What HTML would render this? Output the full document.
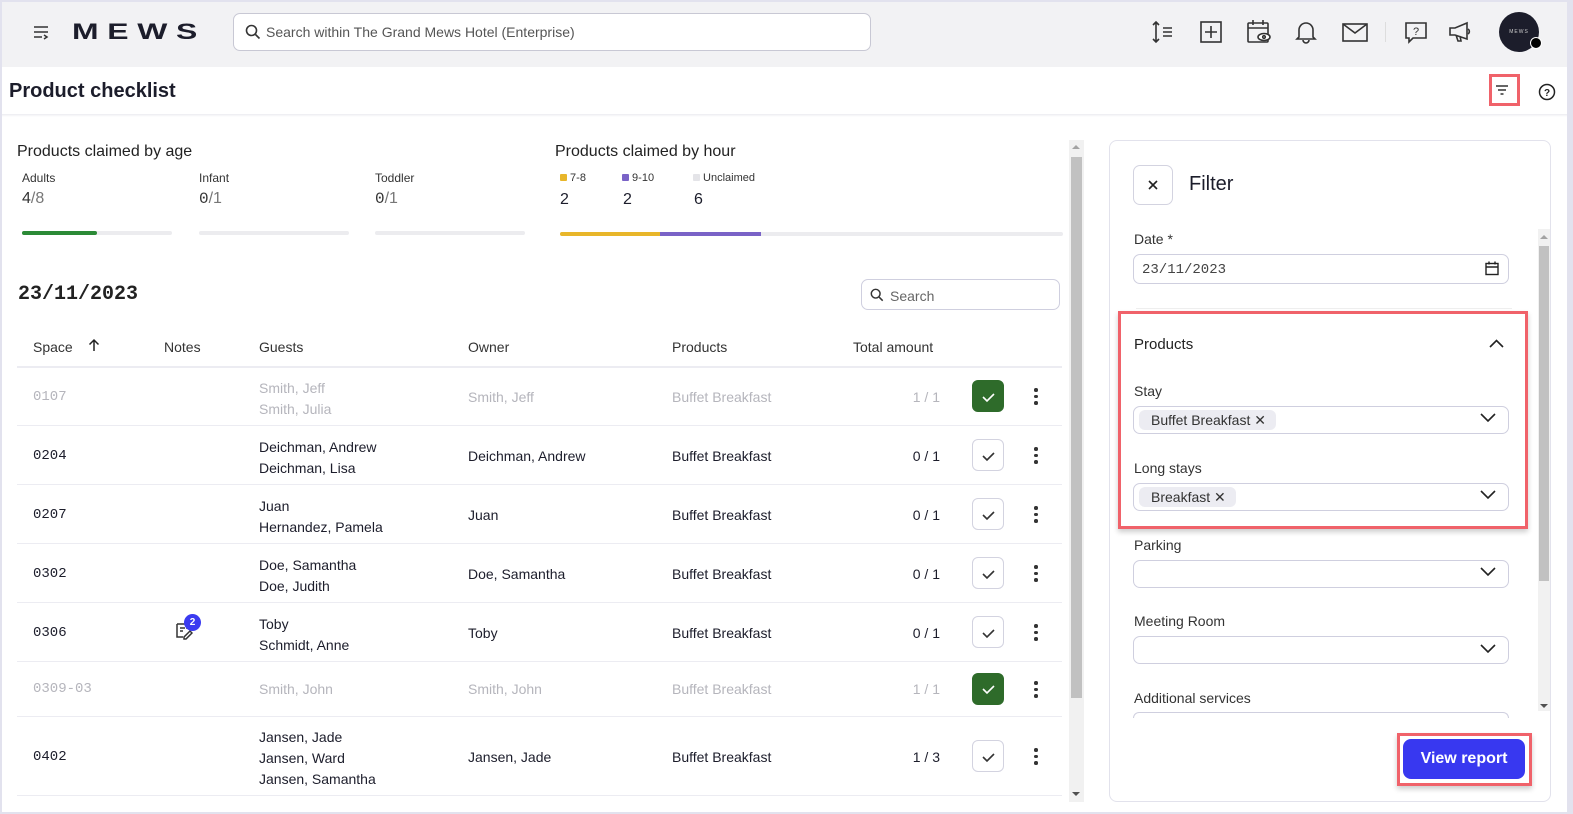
<!DOCTYPE html>
<html><head><meta charset="utf-8"><style>
*{box-sizing:border-box;margin:0;padding:0}
body{width:1573px;height:814px;overflow:hidden;background:#fff;font-family:"Liberation Sans",sans-serif;color:#1c1d2b;position:relative}
.abs{position:absolute}
.frame{position:absolute;left:0;top:0;width:1573px;height:814px;border:2px solid #e2e2ee;border-right-width:6px;pointer-events:none}
.top{left:0;top:0;width:1573px;height:67px;background:#f2f2f4}
.mono{font-family:"Liberation Mono",monospace}
.t14{font-size:14px}
.g{color:#b5b5bc}
.amt{position:absolute;left:900px;width:40px;text-align:right;font-size:14px}
.row{position:absolute;left:17px;width:1045px;border-top:1px solid #ececf2}
.cb{position:absolute;width:32px;height:32px;border:1px solid #d3d3e0;border-radius:6px;background:#fff}
.cb.on{background:#2e6b2a;border-color:#2e6b2a}
.dots{position:absolute;width:4px}
.dots i{display:block;width:3.5px;height:3.5px;border-radius:50%;background:#333;margin-bottom:3px}
.sel{position:absolute;left:1133px;width:376px;height:28px;border:1px solid #cfcfdf;border-radius:7px;background:#fff}
.lbl{position:absolute;left:1134px;font-size:14px;color:#333}
.chip{position:absolute;top:3px;left:5px;height:20px;background:#ececf2;border-radius:6px;font-size:14px;padding:2px 10px 0 12px;color:#333}
.red{position:absolute;border:3px solid #f0626a}
</style></head><body>
<div class="abs top"></div>
<svg class="abs" style="left:32px;top:24px" width="20" height="18" viewBox="0 0 20 18"><path d="M2 3h14M2 8h14M2 13h8M12 11l3 2-3 2" stroke="#333" stroke-width="1.5" fill="none"/></svg>
<div class="abs" style="left:72px;top:19px;font-size:22px;font-weight:bold;letter-spacing:6px;color:#1c1d2b;transform:scaleX(1.45);transform-origin:left">MEWS</div>
<div class="abs" style="left:233px;top:13px;width:638px;height:38px;border:1px solid #c8c8d4;border-radius:7px;background:#fff"></div>
<svg class="abs" style="left:245px;top:24px" width="16" height="16" viewBox="0 0 16 16"><circle cx="6.5" cy="6.5" r="5" stroke="#333" stroke-width="1.6" fill="none"/><path d="M10.5 10.5l4 4" stroke="#333" stroke-width="1.6"/></svg>
<div class="abs t14" style="left:266px;top:24px;color:#555">Search within The Grand Mews Hotel (Enterprise)</div>
<svg class="abs" style="left:1150px;top:19px" width="26" height="26" viewBox="0 0 26 26" fill="none" stroke="#333" stroke-width="1.6"><path d="M6 3v20M3 6l3-3 3 3M3 20l3 3 3-3M13 9h9M13 13h9M13 17h9"/></svg>
<svg class="abs" style="left:1200px;top:21px" width="22" height="22" viewBox="0 0 22 22" fill="none" stroke="#333" stroke-width="1.6"><rect x="1" y="1" width="20" height="20"/><path d="M11 5v12M5 11h12"/></svg>
<svg class="abs" style="left:1247px;top:19px" width="26" height="26" viewBox="0 0 26 26" fill="none" stroke="#333" stroke-width="1.6"><rect x="1" y="4" width="20" height="19" rx="1"/><path d="M1 9h20M6 1v5M16 1v5"/><ellipse cx="17" cy="18" rx="6" ry="3.5" fill="#fff"/><circle cx="17" cy="18" r="1.3"/></svg>
<svg class="abs" style="left:1295px;top:20px" width="22" height="24" viewBox="0 0 22 24" fill="none" stroke="#333" stroke-width="1.6"><path d="M4 17V10a7 7 0 0114 0v7l2 2H2zM8 20a3 3 0 006 0"/></svg>
<svg class="abs" style="left:1342px;top:23px" width="26" height="19" viewBox="0 0 26 19" fill="none" stroke="#333" stroke-width="1.6"><rect x="1" y="1" width="24" height="17"/><path d="M1 1l12 9 12-9"/></svg>
<div class="abs" style="left:1385px;top:22px;width:1px;height:20px;background:#ddd"></div>
<svg class="abs" style="left:1405px;top:22px" width="22" height="22" viewBox="0 0 22 22" fill="none" stroke="#333" stroke-width="1.6"><path d="M1 1h20v15H8l-4 4v-4H1z"/><text x="11" y="13" font-size="11" text-anchor="middle" fill="#333" stroke="none" font-family="Liberation Sans">?</text></svg>
<svg class="abs" style="left:1447px;top:21px" width="26" height="22" viewBox="0 0 26 22" fill="none" stroke="#333" stroke-width="1.6"><path d="M3 7h5l12-5v16L8 14H3zM9 14l2 6h3l-1-5"/><path d="M21 8a3 3 0 010 5"/></svg>
<div class="abs" style="left:1499px;top:12px;width:40px;height:40px;border-radius:50%;background:#1c1d2b;color:#ccc;font-size:5px;text-align:center;line-height:40px;letter-spacing:1px">MEWS</div>
<div class="abs" style="left:1530px;top:37px;width:12px;height:12px;border-radius:50%;background:#000;border:1px solid #fff"></div>
<div class="abs" style="left:9px;top:80px;font-size:20px;font-weight:bold;color:#1c1d2b">Product checklist</div>
<div class="abs" style="left:0;top:114px;width:1573px;height:3px;background:linear-gradient(#ececf0,#fff)"></div>
<div class="red" style="left:1489px;top:74px;width:31px;height:32px"></div>
<svg class="abs" style="left:1494px;top:84px" width="16" height="12" viewBox="0 0 16 12" stroke="#333" stroke-width="1.5"><path d="M2 2h12M4 6h8M6.5 10h3"/></svg>
<svg class="abs" style="left:1538px;top:83px" width="18" height="18" viewBox="0 0 18 18" fill="none" stroke="#222" stroke-width="1.5"><circle cx="9" cy="9" r="7.5"/><text x="9" y="13" font-size="10" text-anchor="middle" fill="#222" stroke="none" font-family="Liberation Sans" font-weight="bold">?</text></svg>
<div class="abs" style="left:17px;top:143px;font-size:16px;color:#222">Products claimed by age</div>
<div class="abs" style="left:22px;top:171px;font-size:12px;color:#333">Adults</div>
<div class="abs" style="left:199px;top:171px;font-size:12px;color:#333">Infant</div>
<div class="abs" style="left:375px;top:171px;font-size:12px;color:#333">Toddler</div>
<div class="abs" style="left:22px;top:190px;font-size:16px;color:#333">4<span style="color:#777">/8</span></div>
<div class="abs mono" style="left:199px;top:190px;font-size:16px;color:#333">0<span style="color:#777;font-family:'Liberation Sans'">/1</span></div>
<div class="abs mono" style="left:375px;top:190px;font-size:16px;color:#333">0<span style="color:#777;font-family:'Liberation Sans'">/1</span></div>
<div class="abs" style="left:22px;top:231px;width:150px;height:4px;border-radius:2px;background:#ececef"><div style="width:75px;height:4px;border-radius:2px;background:#2b8a36"></div></div>
<div class="abs" style="left:199px;top:231px;width:150px;height:4px;border-radius:2px;background:#ececef"></div>
<div class="abs" style="left:375px;top:231px;width:150px;height:4px;border-radius:2px;background:#ececef"></div>
<div class="abs" style="left:555px;top:143px;font-size:16px;color:#222">Products claimed by hour</div>
<div class="abs" style="left:560px;top:172px;font-size:11px;color:#333"><span style="display:inline-block;width:7px;height:7px;background:#e8b62a;border-radius:1px"></span> 7-8</div>
<div class="abs" style="left:622px;top:172px;font-size:11px;color:#333"><span style="display:inline-block;width:7px;height:7px;background:#7a63c7;border-radius:1px"></span> 9-10</div>
<div class="abs" style="left:693px;top:172px;font-size:11px;color:#333"><span style="display:inline-block;width:7px;height:7px;background:#e4e4e8;border-radius:1px"></span> Unclaimed</div>
<div class="abs" style="left:560px;top:191px;font-size:16px">2</div>
<div class="abs" style="left:623px;top:191px;font-size:16px">2</div>
<div class="abs" style="left:694px;top:191px;font-size:16px">6</div>
<div class="abs" style="left:560px;top:232px;width:503px;height:4px;border-radius:2px;background:#ececef;overflow:hidden"><div style="float:left;width:100px;height:4px;background:#e8b62a"></div><div style="float:left;width:101px;height:4px;background:#7a63c7"></div></div>
<div class="abs mono" style="left:18px;top:283px;font-size:20px;font-weight:bold;color:#222">23/11/2023</div>
<div class="abs" style="left:861px;top:279px;width:199px;height:31px;border:1px solid #cfcfdf;border-radius:7px"></div>
<svg class="abs" style="left:870px;top:288px" width="14" height="14" viewBox="0 0 16 16"><circle cx="6.5" cy="6.5" r="5" stroke="#333" stroke-width="1.7" fill="none"/><path d="M10.5 10.5l4 4" stroke="#333" stroke-width="1.7"/></svg>
<div class="abs t14" style="left:890px;top:288px;color:#666">Search</div>
<div class="abs t14" style="left:33px;top:339px;color:#333">Space</div>
<svg class="abs" style="left:88px;top:338px" width="12" height="14" viewBox="0 0 12 14" fill="none" stroke="#222" stroke-width="1.5"><path d="M6 13V2M1.5 6.5L6 2l4.5 4.5"/></svg>
<div class="abs t14" style="left:164px;top:339px;color:#333">Notes</div>
<div class="abs t14" style="left:259px;top:339px;color:#333">Guests</div>
<div class="abs t14" style="left:468px;top:339px;color:#333">Owner</div>
<div class="abs t14" style="left:672px;top:339px;color:#333">Products</div>
<div class="abs t14" style="left:853px;top:339px;color:#333">Total amount</div>
<div class="row" style="top:366px;border-top-width:2px"></div>
<div class="row" style="top:425px"></div><div class="row" style="top:484px"></div><div class="row" style="top:543px"></div><div class="row" style="top:602px"></div><div class="row" style="top:661px"></div><div class="row" style="top:716px"></div><div class="row" style="top:795px"></div>

<div class="abs mono t14 g" style="left:33px;top:389px">0107</div>
<div class="abs t14 g" style="left:259px;top:378px;line-height:21px">Smith, Jeff<br>Smith, Julia</div>
<div class="abs t14 g" style="left:468px;top:389px">Smith, Jeff</div>
<div class="abs t14 g" style="left:672px;top:389px">Buffet Breakfast</div>
<div class="amt g" style="top:389px">1 / 1</div>

<div class="abs mono t14" style="left:33px;top:448px">0204</div>
<div class="abs t14" style="left:259px;top:437px;line-height:21px">Deichman, Andrew<br>Deichman, Lisa</div>
<div class="abs t14" style="left:468px;top:448px">Deichman, Andrew</div>
<div class="abs t14" style="left:672px;top:448px">Buffet Breakfast</div>
<div class="amt" style="top:448px">0 / 1</div>

<div class="abs mono t14" style="left:33px;top:507px">0207</div>
<div class="abs t14" style="left:259px;top:496px;line-height:21px">Juan<br>Hernandez, Pamela</div>
<div class="abs t14" style="left:468px;top:507px">Juan</div>
<div class="abs t14" style="left:672px;top:507px">Buffet Breakfast</div>
<div class="amt" style="top:507px">0 / 1</div>

<div class="abs mono t14" style="left:33px;top:566px">0302</div>
<div class="abs t14" style="left:259px;top:555px;line-height:21px">Doe, Samantha<br>Doe, Judith</div>
<div class="abs t14" style="left:468px;top:566px">Doe, Samantha</div>
<div class="abs t14" style="left:672px;top:566px">Buffet Breakfast</div>
<div class="amt" style="top:566px">0 / 1</div>

<div class="abs mono t14" style="left:33px;top:625px">0306</div>
<svg class="abs" style="left:175px;top:622px" width="18" height="18" viewBox="0 0 18 18" fill="none" stroke="#333" stroke-width="1.5"><path d="M2 2h10v5M2 2v13h6M5 6h5M5 9h3M9 15l6-6 2 2-6 6H9z"/></svg>
<div class="abs" style="left:184px;top:614px;width:17px;height:17px;border-radius:50%;background:#3b3bf0;color:#fff;font-size:10px;font-weight:bold;text-align:center;line-height:17px">2</div>
<div class="abs t14" style="left:259px;top:614px;line-height:21px">Toby<br>Schmidt, Anne</div>
<div class="abs t14" style="left:468px;top:625px">Toby</div>
<div class="abs t14" style="left:672px;top:625px">Buffet Breakfast</div>
<div class="amt" style="top:625px">0 / 1</div>

<div class="abs mono t14 g" style="left:33px;top:681px">0309-03</div>
<div class="abs t14 g" style="left:259px;top:681px">Smith, John</div>
<div class="abs t14 g" style="left:468px;top:681px">Smith, John</div>
<div class="abs t14 g" style="left:672px;top:681px">Buffet Breakfast</div>
<div class="amt g" style="top:681px">1 / 1</div>

<div class="abs mono t14" style="left:33px;top:749px">0402</div>
<div class="abs t14" style="left:259px;top:727px;line-height:21px">Jansen, Jade<br>Jansen, Ward<br>Jansen, Samantha</div>
<div class="abs t14" style="left:468px;top:749px">Jansen, Jade</div>
<div class="abs t14" style="left:672px;top:749px">Buffet Breakfast</div>
<div class="amt" style="top:749px">1 / 3</div>

<div class="cb on" style="left:972px;top:380px"></div><div class="cb" style="left:972px;top:439px"></div><div class="cb" style="left:972px;top:498px"></div><div class="cb" style="left:972px;top:557px"></div><div class="cb" style="left:972px;top:616px"></div><div class="cb on" style="left:972px;top:673px"></div><div class="cb" style="left:972px;top:740px"></div>
<svg class="abs" style="left:972px;top:0" width="32" height="814" viewBox="0 0 32 814" fill="none" stroke-width="1.6">
<path d="M11 397l4 4 7-7" stroke="#fff"/><path d="M11 456l4 4 7-7" stroke="#333"/><path d="M11 515l4 4 7-7" stroke="#333"/><path d="M11 574l4 4 7-7" stroke="#333"/><path d="M11 633l4 4 7-7" stroke="#333"/><path d="M11 689l4 4 7-7" stroke="#fff"/><path d="M11 757l4 4 7-7" stroke="#333"/></svg>
<div class="dots" style="left:1034px;top:388px"><i></i><i></i><i></i></div>
<div class="dots" style="left:1034px;top:447px"><i></i><i></i><i></i></div>
<div class="dots" style="left:1034px;top:506px"><i></i><i></i><i></i></div>
<div class="dots" style="left:1034px;top:565px"><i></i><i></i><i></i></div>
<div class="dots" style="left:1034px;top:624px"><i></i><i></i><i></i></div>
<div class="dots" style="left:1034px;top:681px"><i></i><i></i><i></i></div>
<div class="dots" style="left:1034px;top:748px"><i></i><i></i><i></i></div>
<div class="abs" style="left:1069px;top:140px;width:15px;height:662px;background:#f1f1f1"></div>
<div class="abs" style="left:1071px;top:157px;width:11px;height:541px;background:#c1c1c1"></div>
<div class="abs" style="left:1072px;top:145px;width:0;height:0;border:4px solid transparent;border-bottom-color:#a3a3a3;border-top:0"></div>
<div class="abs" style="left:1072px;top:792px;width:0;height:0;border:4px solid transparent;border-top-color:#505050;border-bottom:0"></div>
<div class="abs" style="left:1109px;top:140px;width:442px;height:662px;border:1px solid #e2e2ec;border-radius:8px;background:#fff"></div>
<div class="abs" style="left:1133px;top:165px;width:40px;height:40px;border:1px solid #d3d3e0;border-radius:7px"></div>
<svg class="abs" style="left:1147px;top:179px" width="12" height="12" viewBox="0 0 12 12" stroke="#222" stroke-width="1.6"><path d="M2 2l8 8M10 2l-8 8"/></svg>
<div class="abs" style="left:1189px;top:173px;font-size:20px;color:#1c1d2b">Filter</div>
<div class="abs" style="left:1538px;top:229px;width:12px;height:482px;background:#f1f1f1"></div>
<div class="abs" style="left:1539px;top:246px;width:10px;height:335px;background:#c1c1c1"></div>
<div class="abs" style="left:1540px;top:235px;width:0;height:0;border:4px solid transparent;border-bottom-color:#a3a3a3;border-top:0"></div>
<div class="abs" style="left:1540px;top:704px;width:0;height:0;border:4px solid transparent;border-top-color:#505050;border-bottom:0"></div>
<div class="lbl" style="top:231px">Date *</div>
<div class="sel" style="top:254px;height:30px"></div>
<div class="abs mono t14" style="left:1142px;top:262px;color:#444">23/11/2023</div>
<svg class="abs" style="left:1485px;top:261px" width="14" height="15" viewBox="0 0 14 15" fill="none" stroke="#222" stroke-width="1.4"><rect x="1" y="2.5" width="12" height="11"/><path d="M1 6h12M4 0.5v3M10 0.5v3"/></svg>
<div class="abs" style="left:1136px;top:308px;width:376px;height:1px;background:#eee"></div>
<div class="lbl" style="top:336px;font-size:15px;color:#222">Products</div>
<svg class="abs" style="left:1489px;top:339px" width="15" height="9" viewBox="0 0 15 9" fill="none" stroke="#222" stroke-width="1.6"><path d="M1 8l6.5-6.5L14 8"/></svg>
<div class="lbl" style="top:383px">Stay</div>
<div class="sel" style="top:406px"><div class="chip">Buffet Breakfast ✕</div></div>
<div class="lbl" style="top:460px">Long stays</div>
<div class="sel" style="top:483px"><div class="chip">Breakfast ✕</div></div>
<div class="lbl" style="top:537px">Parking</div>
<div class="sel" style="top:560px"></div>
<div class="lbl" style="top:613px">Meeting Room</div>
<div class="sel" style="top:636px"></div>
<div class="lbl" style="top:690px">Additional services</div>
<div class="abs" style="left:1133px;top:712px;width:376px;height:6px;border:1px solid #cfcfdf;border-bottom:0;border-radius:7px 7px 0 0"></div>
<svg class="abs" style="left:1480px;top:0" width="16" height="814" viewBox="0 0 16 814" fill="none" stroke="#222" stroke-width="1.6"><path d="M1 414l7 7 7-7M1 491l7 7 7-7M1 568l7 7 7-7M1 645l7 7 7-7"/></svg>
<div class="red" style="left:1118px;top:311px;width:410px;height:218px;box-shadow:0 3px 5px rgba(0,0,0,.2)"></div>
<div class="abs" style="left:1403px;top:739px;width:122px;height:40px;border-radius:8px;background:#3838f0;color:#fff;font-size:16px;font-weight:bold;text-align:center;line-height:40px">View report</div>
<div class="red" style="left:1397px;top:733px;width:135px;height:53px;box-shadow:0 3px 5px rgba(0,0,0,.2)"></div>
<div class="frame"></div>
</body></html>
